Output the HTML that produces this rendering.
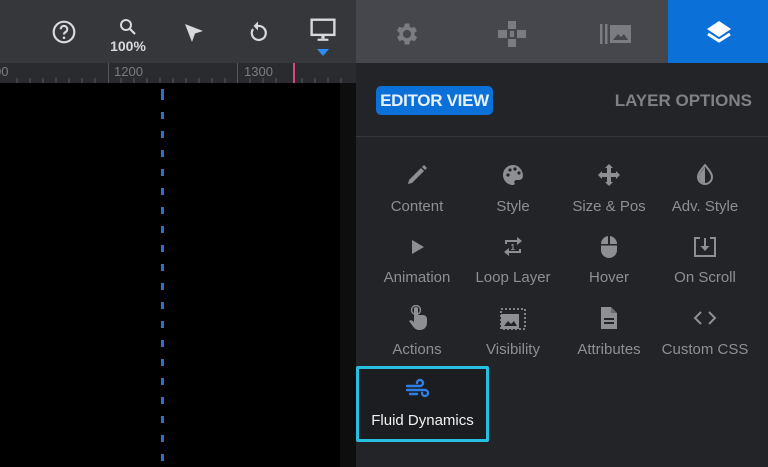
<!DOCTYPE html>
<html><head><meta charset="utf-8"><style>
*{margin:0;padding:0;box-sizing:border-box}
body{width:768px;height:467px;overflow:hidden;background:#000;font-family:"Liberation Sans",sans-serif;position:relative}
.abs{position:absolute}
.lbl{position:absolute;width:96px;text-align:center;color:#8e8f93;font-size:15px}
svg{position:absolute}
</style></head><body>
<div class="abs" style="left:0;top:0;width:356px;height:63px;background:#36373b"></div>
<div class="abs" style="left:356px;top:0;width:312px;height:63px;background:#45474d"></div>
<div class="abs" style="left:668px;top:0;width:100px;height:63px;background:#0b70d8"></div>
<div class="abs" style="left:0;top:63px;width:356px;height:20px;background:#2a2b2e"></div>
<svg style="left:0;top:63px" width="356" height="20">
<g stroke="#55575c" stroke-width="1">
<line x1="108.5" y1="0" x2="108.5" y2="20"/><line x1="237.5" y1="0" x2="237.5" y2="20"/>
<line x1="17" y1="15" x2="17" y2="20"/><line x1="30" y1="15" x2="30" y2="20"/><line x1="43" y1="15" x2="43" y2="20"/><line x1="56" y1="15" x2="56" y2="20"/><line x1="69" y1="15" x2="69" y2="20"/><line x1="82" y1="15" x2="82" y2="20"/><line x1="95" y1="15" x2="95" y2="20"/>
<line x1="121" y1="15" x2="121" y2="20"/><line x1="134" y1="15" x2="134" y2="20"/><line x1="147" y1="15" x2="147" y2="20"/><line x1="160" y1="15" x2="160" y2="20"/><line x1="173" y1="15" x2="173" y2="20"/><line x1="186" y1="15" x2="186" y2="20"/><line x1="199" y1="15" x2="199" y2="20"/><line x1="212" y1="15" x2="212" y2="20"/><line x1="225" y1="15" x2="225" y2="20"/>
<line x1="250" y1="15" x2="250" y2="20"/><line x1="263" y1="15" x2="263" y2="20"/><line x1="276" y1="15" x2="276" y2="20"/><line x1="302" y1="15" x2="302" y2="20"/><line x1="315" y1="15" x2="315" y2="20"/><line x1="328" y1="15" x2="328" y2="20"/><line x1="341" y1="15" x2="341" y2="20"/>
</g>
<line x1="294" y1="0" x2="294" y2="20" stroke="#e0457a" stroke-width="2"/>
<text x="-6" y="13" fill="#7a7c80" font-size="13" font-family="Liberation Sans">00</text>
<text x="114" y="13" fill="#7a7c80" font-size="13" font-family="Liberation Sans">1200</text>
<text x="244" y="13" fill="#7a7c80" font-size="13" font-family="Liberation Sans">1300</text>
</svg>
<div class="abs" style="left:340px;top:83px;width:16px;height:384px;background:#0e0e0f"></div>
<div class="abs" style="left:161px;top:83px;width:3px;height:384px;background:repeating-linear-gradient(#2f6fd0 0 7px,transparent 7px 19px);background-position:0 10px"></div>
<svg style="left:51px;top:19px" width="26" height="26" viewBox="0 0 24 24"><circle cx="12" cy="12" r="9.5" fill="none" stroke="#d8d9dc" stroke-width="2"/><path d="M9 9.5a3 3 0 1 1 4.5 2.5c-1 .6-1.5 1.2-1.5 2.3" fill="none" stroke="#d8d9dc" stroke-width="2"/><circle cx="12" cy="17.3" r="1.2" fill="#d8d9dc"/></svg>
<svg style="left:119px;top:18px" width="18" height="18" viewBox="0 0 18 18"><circle cx="7" cy="7" r="5" fill="none" stroke="#d8d9dc" stroke-width="2"/><path d="M10.5 10.5L16 16" stroke="#d8d9dc" stroke-width="2.2"/></svg>
<div class="abs" style="left:100px;top:38px;width:56px;text-align:center;color:#d8d9dc;font-size:14px;font-weight:bold">100%</div>
<svg style="left:183px;top:22px" width="22" height="22" viewBox="0 0 22 22"><path d="M2 2L20 9L12 11.5L9 20Z" fill="#d8d9dc"/></svg>
<svg style="left:247px;top:20px" width="22" height="24" viewBox="0 0 22 24"><path d="M6 9A7 7 0 1 0 11 6" fill="none" stroke="#d8d9dc" stroke-width="2.2"/><path d="M11 1.5L11 10.5L6.5 6Z" fill="#d8d9dc"/></svg>
<svg style="left:310px;top:18px" width="26" height="24" viewBox="0 0 24 22"><rect x="1.5" y="1.5" width="21" height="14" fill="none" stroke="#d8d9dc" stroke-width="2.2"/><rect x="10.5" y="16" width="3" height="3" fill="#d8d9dc"/><rect x="7" y="19" width="10" height="2" fill="#d8d9dc"/></svg>
<svg style="left:317px;top:49px" width="12" height="7"><path d="M0 0H12L6 7Z" fill="#2f8cf0"/></svg>
<svg style="left:393px;top:20px" width="28" height="28" viewBox="0 0 24 24"><path fill="#7a7c82" d="M19.4 13a7.5 7.5 0 0 0 0-2l2.1-1.6-2-3.5-2.5 1a7.5 7.5 0 0 0-1.7-1L15 3h-4l-.4 2.7a7.5 7.5 0 0 0-1.7 1l-2.5-1-2 3.5L6.6 11a7.5 7.5 0 0 0 0 2l-2.1 1.6 2 3.5 2.5-1a7.5 7.5 0 0 0 1.7 1L11 21h4l.4-2.7a7.5 7.5 0 0 0 1.7-1l2.5 1 2-3.5zM13 15.5a3.5 3.5 0 1 1 0-7 3.5 3.5 0 0 1 0 7z" transform="translate(-1 0)"/></svg>
<svg style="left:497px;top:20px" width="30" height="28" viewBox="0 0 30 28"><rect x="11" y="1" width="8" height="8" fill="#7a7c82"/><rect x="11" y="19" width="8" height="8" fill="#7a7c82"/><rect x="1" y="10" width="9" height="8" fill="#7a7c82"/><rect x="20" y="10" width="9" height="8" fill="#7a7c82"/><rect x="13" y="11" width="4" height="6" fill="#7a7c82"/></svg>
<svg style="left:600px;top:24px" width="32" height="20" viewBox="0 0 32 20"><rect x="0" y="0" width="2.5" height="20" fill="#7a7c82"/><rect x="5" y="0" width="2.5" height="20" fill="#7a7c82"/><rect x="10" y="1" width="21" height="18" fill="#7a7c82"/><path d="M13 16L18 10L21 13L24 10L28 16Z" fill="#45474d"/></svg>
<svg style="left:705px;top:19px" width="28" height="28" viewBox="0 0 28 28"><path d="M14 2L26 10L14 18L2 10Z" fill="#fff"/><path d="M3 15L14 22L25 15" fill="none" stroke="#fff" stroke-width="3"/></svg>
<div class="abs" style="left:356px;top:63px;width:412px;height:404px;background:#232427"></div>
<div class="abs" style="left:356px;top:136px;width:412px;height:1px;background:#36373b"></div>
<div class="abs" style="left:376px;top:86px;width:117px;height:29px;background:#0b70d8;border-radius:5px;color:#e8f0fa;font-weight:bold;font-size:17px;text-align:center;line-height:29px;letter-spacing:-0.3px">EDITOR VIEW</div>
<div class="abs" style="left:580px;top:91px;width:172px;text-align:right;color:#808185;font-weight:bold;font-size:17px;line-height:20px">LAYER OPTIONS</div>
<svg style="left:406px;top:164px" width="22" height="22" viewBox="0 0 22 22"><path d="M3 16L15 4L18 7L6 19L2 20Z" fill="#8e8f93"/><path d="M16 3L18 1L21 4L19 6Z" fill="#8e8f93"/></svg>
<svg style="left:502px;top:164px" width="22" height="22" viewBox="0 0 22 22"><path d="M11 1a10 10 0 0 0 0 20c1.5 0 2-1 1.5-2-.7-1.3.2-3 2-3H17a4 4 0 0 0 4-4c0-6-4.5-11-10-11z" fill="#8e8f93"/><circle cx="6" cy="11" r="1.6" fill="#232427"/><circle cx="8" cy="6" r="1.6" fill="#232427"/><circle cx="13" cy="5" r="1.6" fill="#232427"/><circle cx="17" cy="9" r="1.6" fill="#232427"/></svg>
<svg style="left:597px;top:163px" width="24" height="24" viewBox="0 0 24 24"><path d="M12 1L16 5H8ZM12 23L8 19H16ZM1 12L5 8V16ZM23 12L19 16V8Z" fill="#8e8f93"/><rect x="10" y="5" width="4" height="14" fill="#8e8f93"/><rect x="5" y="10" width="14" height="4" fill="#8e8f93"/></svg>
<svg style="left:695px;top:164px" width="20" height="22" viewBox="0 0 20 22"><path d="M10 1C7 5 3 9 3 13a7 7 0 0 0 14 0c0-4-4-8-7-12z" fill="none" stroke="#8e8f93" stroke-width="2"/><path d="M10 3C8 6 4 10 4 13a6 6 0 0 0 6 6z" fill="#8e8f93"/></svg>
<svg style="left:410px;top:238px" width="16" height="18"><path d="M2 2L14 9L2 16Z" fill="#8e8f93"/></svg>
<svg style="left:502px;top:236px" width="22" height="22" viewBox="0 0 22 22"><path d="M4 8V5H16" fill="none" stroke="#8e8f93" stroke-width="2"/><path d="M15 1L20 5L15 9Z" fill="#8e8f93"/><path d="M18 13V16H6" fill="none" stroke="#8e8f93" stroke-width="2"/><path d="M7 12L2 16L7 20Z" fill="#8e8f93"/><text x="8.5" y="14" font-size="8" font-weight="bold" fill="#8e8f93" font-family="Liberation Sans">1</text></svg>
<svg style="left:600px;top:235px" width="18" height="24" viewBox="0 0 18 24"><path d="M1 9a8 8 0 0 1 16 0v6a8 8 0 0 1-16 0z" fill="#8e8f93"/><rect x="8" y="1" width="2" height="8" fill="#232427"/><rect x="1" y="9" width="16" height="1.5" fill="#232427"/></svg>
<svg style="left:693px;top:236px" width="24" height="22" viewBox="0 0 24 22"><path d="M7 2H2V20H22V2H17" fill="none" stroke="#8e8f93" stroke-width="2"/><rect x="11" y="2" width="2" height="10" fill="#8e8f93"/><path d="M7.5 10H16.5L12 15Z" fill="#8e8f93"/></svg>
<svg style="left:407px;top:305px" width="22" height="26" viewBox="0 0 22 26"><path d="M7 12V4a2 2 0 0 1 4 0v6h5a4 4 0 0 1 4 4v4c0 4-3 7-7 7h-1c-3 0-5-2-7-5l-3-4 2-1 3 2z" fill="#8e8f93"/><circle cx="9" cy="5" r="4.5" fill="none" stroke="#8e8f93" stroke-width="1.4"/></svg>
<svg style="left:500px;top:308px" width="26" height="22" viewBox="0 0 26 22"><rect x="1" y="1" width="24" height="20" fill="none" stroke="#8e8f93" stroke-width="1.8" stroke-dasharray="2 2"/><rect x="1" y="6" width="18" height="15" fill="#8e8f93"/><path d="M4 18L8 13L11 16L14 13L17 18Z" fill="#232427"/></svg>
<svg style="left:600px;top:306px" width="18" height="24" viewBox="0 0 18 24"><path d="M1 1H11L17 7V23H1Z" fill="#8e8f93"/><path d="M11 1V7H17" fill="#6a6b70"/><rect x="4" y="12" width="10" height="2" fill="#232427"/><rect x="4" y="16" width="10" height="2" fill="#232427"/></svg>
<svg style="left:693px;top:309px" width="24" height="18" viewBox="0 0 24 18"><path d="M8 3L2 9L8 15M16 3L22 9L16 15" fill="none" stroke="#8e8f93" stroke-width="2"/></svg>
<div class="lbl" style="left:369px;top:198px">Content</div>
<div class="lbl" style="left:465px;top:198px">Style</div>
<div class="lbl" style="left:561px;top:198px">Size &amp; Pos</div>
<div class="lbl" style="left:657px;top:198px">Adv. Style</div>
<div class="lbl" style="left:369px;top:269px">Animation</div>
<div class="lbl" style="left:465px;top:269px">Loop Layer</div>
<div class="lbl" style="left:561px;top:269px">Hover</div>
<div class="lbl" style="left:657px;top:269px">On Scroll</div>
<div class="lbl" style="left:369px;top:341px">Actions</div>
<div class="lbl" style="left:465px;top:341px">Visibility</div>
<div class="lbl" style="left:561px;top:341px">Attributes</div>
<div class="lbl" style="left:652px;top:341px;width:106px">Custom CSS</div>
<div class="abs" style="left:356px;top:366px;width:133px;height:76px;border:3px solid #27bfe0;background:#1c1d20;border-radius:2px"></div>
<svg style="left:405px;top:378px" width="26" height="22" viewBox="0 0 26 22"><g fill="none" stroke="#2f7ee6" stroke-width="2.4" stroke-linecap="round"><path d="M2 8H15a3 3 0 1 0-3-3"/><path d="M2 12H20a3 3 0 1 1-3 3"/><path d="M5 16H12"/></g></svg>
<div class="abs" style="left:359px;top:412px;width:127px;text-align:center;color:#f2f2f2;font-size:15px">Fluid Dynamics</div>
</body></html>
